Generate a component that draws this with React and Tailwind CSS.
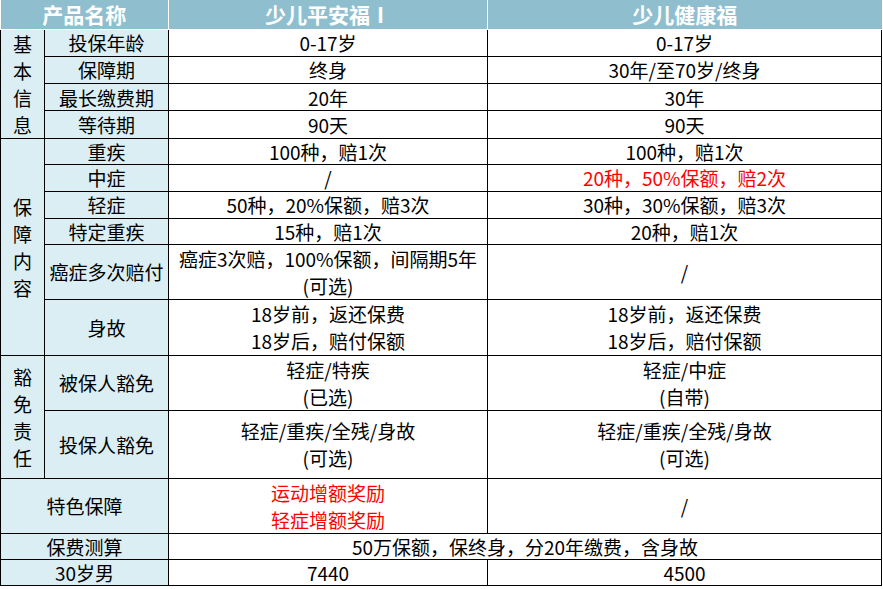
import React from 'react';

const font = { fontFamily: '"Noto Sans CJK SC", "Liberation Sans", sans-serif' };

const rows = [
  { group: '基本信息', span: 4, label: '投保年龄', a: '0-17岁', b: '0-17岁', h: 'h-[26px]' },
  { label: '保障期', a: '终身', b: '30年/至70岁/终身', h: 'h-[26px]' },
  { label: '最长缴费期', a: '20年', b: '30年', h: 'h-[26px]' },
  { label: '等待期', a: '90天', b: '90天', h: 'h-[26px]' },
  { group: '保障内容', span: 6, label: '重疾', a: '100种，赔1次', b: '100种，赔1次', h: 'h-[26px]' },
  { label: '中症', a: '/', b: '20种，50%保额，赔2次', bRed: true, h: 'h-[27px]' },
  { label: '轻症', a: '50种，20%保额，赔3次', b: '30种，30%保额，赔3次', h: 'h-[27px]' },
  { label: '特定重疾', a: '15种，赔1次', b: '20种，赔1次', h: 'h-[26px]' },
  { label: '癌症多次赔付', a: ['癌症3次赔，100%保额，间隔期5年', '(可选)'], b: '/', h: 'h-[55px]' },
  { label: '身故', a: ['18岁前，返还保费', '18岁后，赔付保额'], b: ['18岁前，返还保费', '18岁后，赔付保额'], h: 'h-[56px]' },
  { group: '豁免责任', span: 2, label: '被保人豁免', a: ['轻症/特疾', '(已选)'], b: ['轻症/中症', '(自带)'], h: 'h-[54px]' },
  { label: '投保人豁免', a: ['轻症/重疾/全残/身故', '(可选)'], b: ['轻症/重疾/全残/身故', '(可选)'], h: 'h-[68px]' },
];

const Lines = ({ v }) =>
  Array.isArray(v) ? v.map((t, i) => <div key={i} className="leading-[27px]">{t}</div>) : v;

const cell = 'border border-black text-center align-middle p-0 leading-[25px]';
const side = `${cell} bg-[#daeef3]`;

export default function App() {
  return (
    <div className="bg-white w-[883px] h-[589px] overflow-hidden" style={font}>
      <table className="table-fixed border-collapse w-[881px] text-[19px] text-black">
        <colgroup>
          <col className="w-[44px]" />
          <col className="w-[124px]" />
          <col className="w-[319px]" />
          <col className="w-[394px]" />
        </colgroup>
        <thead>
          <tr className="h-[29px]">
            <th colSpan={2} className="bg-[#8fbfcf] text-white font-bold text-[21px] leading-[28px] p-0 border-r border-b border-white">产品名称</th>
            <th className="bg-[#8fbfcf] text-white font-bold text-[21px] leading-[28px] p-0 border-x border-b border-white">少儿平安福Ⅰ</th>
            <th className="bg-[#8fbfcf] text-white font-bold text-[21px] leading-[28px] p-0 border-l border-b border-white">少儿健康福</th>
          </tr>
        </thead>
        <tbody>
          {rows.map((r, i) => (
            <tr key={i} className={r.h}>
              {r.group && (
                <td rowSpan={r.span} className={`${side} leading-[27px]`}>
                  {r.group.split('').map((c, j) => <div key={j}>{c}</div>)}
                </td>
              )}
              <td className={side}>{r.label}</td>
              <td className={cell}><Lines v={r.a} /></td>
              <td className={`${cell} ${r.bRed ? 'text-[#ff0000]' : ''}`}><Lines v={r.b} /></td>
            </tr>
          ))}
          <tr className="h-[53px]">
            <td colSpan={2} className={side}>特色保障</td>
            <td className={`${cell} text-[#ff0000]`}>
              <Lines v={['运动增额奖励', '轻症增额奖励']} />
            </td>
            <td className={cell}>/</td>
          </tr>
          <tr className="h-[26px]">
            <td colSpan={2} className={side}>保费测算</td>
            <td colSpan={2} className={cell}>50万保额，保终身，分20年缴费，含身故</td>
          </tr>
          <tr className="h-[26px]">
            <td colSpan={2} className={side}>30岁男</td>
            <td className={cell}>7440</td>
            <td className={cell}>4500</td>
          </tr>
        </tbody>
      </table>
    </div>
  );
}
